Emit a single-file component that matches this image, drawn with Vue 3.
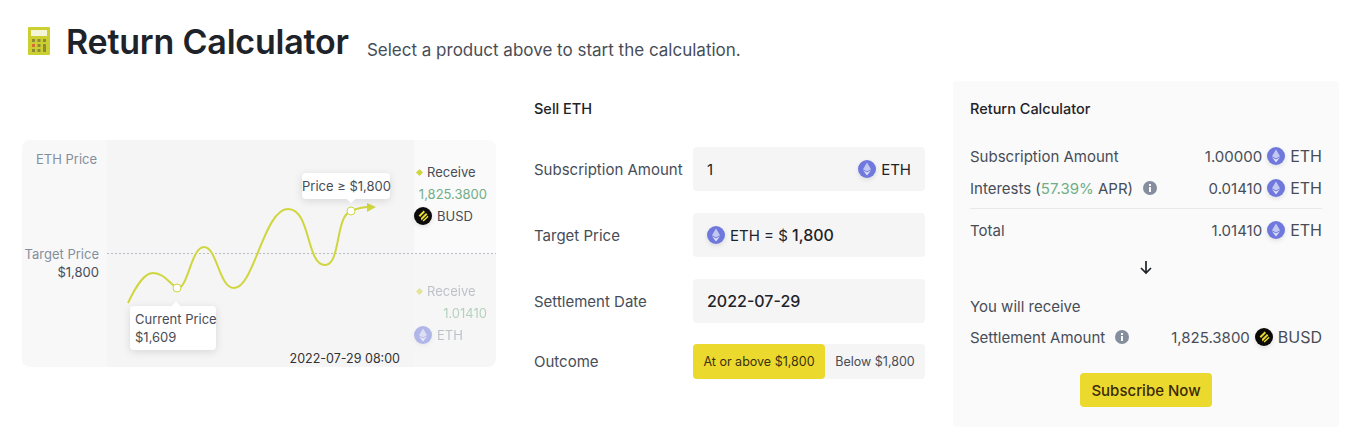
<script setup>
const summary = [
  { label: 'Subscription Amount', value: '1.00000' },
  { label: 'Interests', value: '0.01410', apr: '57.39%' },
]
</script>

<template>
  <div class="page">
    <svg class="defs" aria-hidden="true">
      <symbol id="eth" viewBox="0 0 18 18">
        <circle cx="9" cy="9" r="9" fill="#6f78dc" />
        <path d="M9 2.5 13 9.2 9 11.5 5 9.2Z" fill="#c3c8f3" />
        <path d="M9 12.5 13 10.2 9 15.5 5 10.2Z" fill="#dfe1fa" />
      </symbol>
      <symbol id="busd" viewBox="0 0 18 18">
        <circle cx="9" cy="9" r="9" fill="#0b0a08" />
        <path d="M9.6 3.6 11 5 6 10 4.6 8.6ZM12 6 13.4 7.4 7.4 13.4 6.9 11.1ZM13.9 8.6 14.4 10 9.6 14.4 8.6 13.4Z" fill="#e9d92e" />
      </symbol>
      <symbol id="info" viewBox="0 0 14 14">
        <circle cx="7" cy="7" r="7" fill="#848e9c" />
        <rect x="6" y="6" width="2" height="5" fill="#fafafa" />
        <rect x="6" y="3" width="2" height="2" fill="#fafafa" />
      </symbol>
    </svg>

    <header class="head">
      <svg class="calc" viewBox="0 0 22 28">
        <rect width="22" height="28" rx="1" fill="#cbd030" />
        <rect x="3" y="3" width="16" height="6" fill="#f4f4d6" />
        <g fill="#8d8a3a">
          <rect x="4" y="12" width="3" height="3" />
          <rect x="9.5" y="12" width="3" height="3" />
          <rect x="15" y="12" width="3" height="3" />
          <rect x="9.5" y="17" width="3" height="3" />
          <rect x="15" y="17" width="3" height="8" />
          <rect x="4" y="22" width="3" height="3" />
          <rect x="9.5" y="22" width="3" height="3" />
        </g>
        <rect x="4" y="17" width="3" height="3" fill="#d9693a" />
      </svg>
      <h1 class="title">Return Calculator</h1>
      <p class="sub">Select a product above to start the calculation.</p>
    </header>

    <main class="cols">
      <section class="chart">
        <div class="band-left"></div>
        <div class="band-mid"></div>
        <div class="band-right"></div>
        <svg class="plot" viewBox="22 140 474 227">
          <line x1="107" y1="253.5" x2="496" y2="253.5" stroke="#b7bdc6" stroke-dasharray="2 2" />
          <path d="M128 303C136 286 144 273 153 273C164 273 170 284 177 288C188 290 191 247 204 247C217 247 219 288 234 288C254 288 264 209 288 209C311 209 306 265 325 265C341 265 335 216 351 211C358 208 364 207 369 207" fill="none" stroke="#cfd63f" stroke-width="2" />
          <path d="M367 203 376 207 367 212Z" fill="#cfd63f" />
          <circle cx="177" cy="288" r="4" fill="#fff" stroke="#cfd63f" />
          <circle cx="351" cy="211" r="4" fill="#fff" stroke="#cfd63f" />
        </svg>

        <span class="c-eth">ETH Price</span>
        <div class="c-target"><span>Target Price</span><b>$1,800</b></div>

        <div class="tip tip-top">Price ≥ $1,800</div>
        <div class="tip tip-bottom"><span>Current Price</span><span>$1,609</span></div>

        <div class="recv recv-a">
          <span class="r-label"><i class="dot"></i>Receive</span>
          <span class="r-num">1,825.3800</span>
          <span class="r-coin"><svg class="ic"><use href="#busd" /></svg>BUSD</span>
        </div>
        <div class="recv recv-b">
          <span class="r-label"><i class="dot"></i>Receive</span>
          <span class="r-num">1.01410</span>
          <span class="r-coin"><svg class="ic"><use href="#eth" /></svg>ETH</span>
        </div>
        <span class="c-date">2022-07-29 08:00</span>
      </section>

      <section class="form">
        <h2 class="h2 form-title">Sell ETH</h2>
        <div class="row">
          <label>Subscription Amount</label>
          <div class="field between">
            <span>1</span>
            <span class="coin"><svg class="ic"><use href="#eth" /></svg>ETH</span>
          </div>
        </div>
        <div class="row">
          <label>Target Price</label>
          <div class="field tight"><svg class="ic"><use href="#eth" /></svg><span>ETH = $ <b>1,800</b></span></div>
        </div>
        <div class="row">
          <label>Settlement Date</label>
          <div class="field"><b>2022-07-29</b></div>
        </div>
        <div class="row seg-row">
          <label>Outcome</label>
          <div class="seg">
            <span class="seg-on">At or above $1,800</span>
            <span class="seg-off">Below $1,800</span>
          </div>
        </div>
      </section>

      <aside class="card">
        <h2 class="h2">Return Calculator</h2>
        <div class="sum-top">
          <div v-for="s in summary" :key="s.label" class="line">
            <span class="name">
              {{ s.label }}<template v-if="s.apr"> (<em>{{ s.apr }}</em> APR)<svg class="inf"><use href="#info" /></svg></template>
            </span>
            <span class="val">{{ s.value }}<svg class="ic"><use href="#eth" /></svg><span class="unit">ETH</span></span>
          </div>
        </div>
        <div class="total line">
          <span class="name">Total</span>
          <span class="val">1.01410<svg class="ic"><use href="#eth" /></svg><span class="unit">ETH</span></span>
        </div>
        <svg class="arrow" viewBox="0 0 16 16">
          <path d="M8 2V14M3 9 8 14 13 9" fill="none" stroke="#1e2329" stroke-width="1.7" />
        </svg>
        <p class="name will">You will receive</p>
        <div class="line settle">
          <span class="name">Settlement Amount<svg class="inf"><use href="#info" /></svg></span>
          <span class="val">1,825.3800<svg class="ic"><use href="#busd" /></svg><span class="unit">BUSD</span></span>
        </div>
        <button class="cta" type="button">Subscribe Now</button>
      </aside>
    </main>
  </div>
</template>

<style scoped>
.page {
  width: 1366px;
  height: 448px;
  overflow: hidden;
  background: #fff;
  font-family: Inter, "Noto Sans", sans-serif;
  color: #474d57;
  font-size: 15px;
}
.defs { position: absolute; width: 0; height: 0; }
.head {
  height: 81px;
  display: flex;
  align-items: flex-start;
  padding-left: 28px;
  box-sizing: border-box;
}
.calc { width: 22px; height: 28px; margin-top: 27px; flex: none; }
.title {
  margin: 21px 0 0 16px;
  font-size: 34px;
  line-height: 42px;
  font-weight: 600;
  color: #1e2329;
  letter-spacing: -0.2px;
}
.sub { margin: 39px 0 0 18px; font-size: 17px; line-height: 22px; }
.cols { display: flex; align-items: flex-start; padding-left: 22px; }

.chart {
  position: relative;
  width: 474px;
  height: 227px;
  margin-top: 59px;
  flex: none;
  font-size: 13px;
  color: #848e9c;
}
.band-left, .band-mid, .band-right { position: absolute; top: 0; bottom: 0; }
.band-left { left: 0; width: 85px; background: #f8f8f9; border-radius: 8px 0 0 8px; }
.band-mid { left: 85px; width: 307px; background: #f5f5f5; }
.band-right { left: 392px; right: 0; background: linear-gradient(#fafafa 50%, #f6f6f6 50%); border-radius: 0 8px 8px 0; }
.plot { position: absolute; inset: 0; width: 100%; height: 100%; }
.c-eth { position: absolute; left: 14px; top: 11px; line-height: 16px; }
.c-target {
  position: absolute;
  right: 397px;
  top: 105px;
  display: flex;
  flex-direction: column;
  align-items: flex-end;
  line-height: 18px;
}
.c-target b { font-weight: 400; color: #474d57; }
.tip {
  position: absolute;
  background: #fff;
  border-radius: 4px;
  box-shadow: 0 2px 8px rgba(0, 0, 0, 0.12);
  color: #474d57;
  line-height: 18px;
  white-space: nowrap;
}
.tip::after {
  content: "";
  position: absolute;
  width: 6px;
  height: 6px;
  background: #fff;
  transform: rotate(45deg);
}
.tip-top { left: 280px; top: 33px; width: 88px; height: 26px; line-height: 26px; text-align: center; }
.tip-top::after { left: 46px; bottom: -3px; }
.tip-bottom {
  left: 108px;
  top: 166px;
  width: 86px;
  height: 44px;
  padding: 4px 5px;
  box-sizing: border-box;
  display: flex;
  flex-direction: column;
}
.tip-bottom::after { left: 43px; top: -3px; }
.recv { position: absolute; left: 392px; width: 73px; display: flex; flex-direction: column; }
.recv-a { top: 23px; color: #474d57; }
.recv-b { top: 142px; opacity: 0.5; }
.r-label { display: flex; align-items: center; height: 18px; padding-left: 3px; gap: 5px; }
.dot { width: 5px; height: 5px; background: #cfd63f; transform: rotate(45deg); }
.r-num { text-align: right; color: #72ad88; height: 18px; line-height: 18px; margin-top: 4px; }
.r-coin { display: flex; align-items: center; gap: 5px; height: 18px; margin-top: 4px; font-size: 13px; }
.ic { width: 18px; height: 18px; flex: none; filter: drop-shadow(0 2px 2px rgba(0, 0, 0, 0.1)); }
.c-date { position: absolute; right: 96px; top: 211px; color: #333; font-size: 12.5px; line-height: 16px; }

.form { width: 391px; margin-left: 38px; margin-top: 17px; flex: none; }
.h2 { margin: 0; font-size: 14.5px; line-height: 22px; font-weight: 500; color: #1e2329; }
.form-title { margin-bottom: 27px; margin-top: 0; }
.row {
  display: grid;
  grid-template-columns: 159px 232px;
  align-items: center;
  margin-bottom: 22px;
}
.row label { font-size: 15px; }
.field {
  height: 44px;
  background: #f5f5f5;
  border-radius: 4px;
  display: flex;
  align-items: center;
  padding: 0 14px;
  box-sizing: border-box;
  color: #1e2329;
}
.field b { font-weight: 500; font-size: 16px; }
.between { justify-content: space-between; }
.coin { display: flex; align-items: center; gap: 5px; }
.tight { gap: 5px; }
.seg-row { margin-top: -1px; }
.seg { display: flex; height: 35px; background: #f5f5f5; border-radius: 4px; font-size: 12.5px; align-items: stretch; }
.seg span { display: flex; align-items: center; justify-content: center; }
.seg-on { width: 132px; background: #ecd92e; border-radius: 4px; color: #3a3210; }
.seg-off { flex: 1; }

.card {
  width: 386px;
  height: 346px;
  margin-left: 28px;
  background: #fafafa;
  padding: 17px;
  box-sizing: border-box;
  flex: none;
  border-radius: 4px;
  display: flex;
  flex-direction: column;
}
.sum-top { margin-top: 25px; padding-bottom: 9px; border-bottom: 1px solid #e6e8ea; display: flex; flex-direction: column; gap: 10px; }
.line { display: flex; justify-content: space-between; align-items: center; height: 22px; }
.name { display: inline-flex; align-items: center; white-space: pre; margin: 0; }
.name em { font-style: normal; color: #6fae88; }
.inf { width: 14px; height: 14px; margin-left: 10px; flex: none; }
.val { display: flex; align-items: center; }
.val .ic { margin: 0 5px 0 5px; }
.unit { font-size: 16px; }
.total { margin-top: 10px; }
.arrow { width: 16px; height: 16px; align-self: center; margin-top: 18px; flex: none; }
.will { margin-top: 21px; line-height: 22px; }
.settle { margin-top: 8px; }
.cta {
  align-self: center;
  width: 132px;
  height: 34px;
  margin-top: 25px;
  border: 0;
  border-radius: 4px;
  background: #ecd92e;
  color: #3a2a08;
  font: 500 15px Inter, sans-serif;
  flex: none;
}
</style>
